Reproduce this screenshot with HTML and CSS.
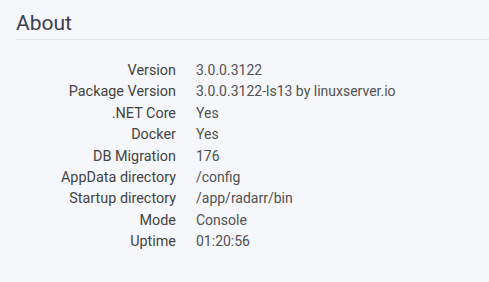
FILE: index.html
```html
<!DOCTYPE html>
<html lang="en">
<head>
    <meta charset="UTF-8">
    <title>About</title>
    <link rel="stylesheet" href="styles.css">
</head>
<body>
    <div class="page-content">
        <fieldset class="about">
            <legend class="legend">About</legend>

            <dl class="info-list">
                <div class="item"><dt>Version</dt><dd>3.0.0.3122</dd></div>
                <div class="item"><dt>Package Version</dt><dd>3.0.0.3122-ls13 by linuxserver.io</dd></div>
                <div class="item"><dt>.NET Core</dt><dd>Yes</dd></div>
                <div class="item"><dt>Docker</dt><dd>Yes</dd></div>
                <div class="item"><dt>DB Migration</dt><dd>176</dd></div>
                <div class="item"><dt>AppData directory</dt><dd>/config</dd></div>
                <div class="item"><dt>Startup directory</dt><dd>/app/radarr/bin</dd></div>
                <div class="item"><dt>Mode</dt><dd>Console</dd></div>
                <div class="item"><dt>Uptime</dt><dd>01:20:56</dd></div>
            </dl>
        </fieldset>
    </div>
</body>
</html>
```

FILE: styles.css
```css
body {
    margin: 0;
    padding: 0;
    background-color: #f5f7fa;
    font-family: Roboto, "Open Sans", sans-serif;
    font-size: 14px;
    line-height: 1.528571429;
    color: #515253;
}
.page-content {
    padding: 8px 0 0 16px;
}
.about {
    margin: 0;
    padding: 0;
    border: none;
    min-width: 0;
}
.legend {
    display: block;
    width: 100%;
    padding: 0;
    margin-bottom: 20px;
    border-bottom: 1px solid #e5e5e5;
    font-size: 21px;
    line-height: 31px;
    color: #3a3f51;
}
.info-list {
    margin: 0;
}
.item {
    display: flex;
    align-items: baseline;
    height: 21.4px;
}
.item dt {
    width: 160px;
    margin-right: 20px;
    text-align: right;
    font-size: 14.4px;
    color: #444;
}
.item dd {
    margin: 0;
}
```
